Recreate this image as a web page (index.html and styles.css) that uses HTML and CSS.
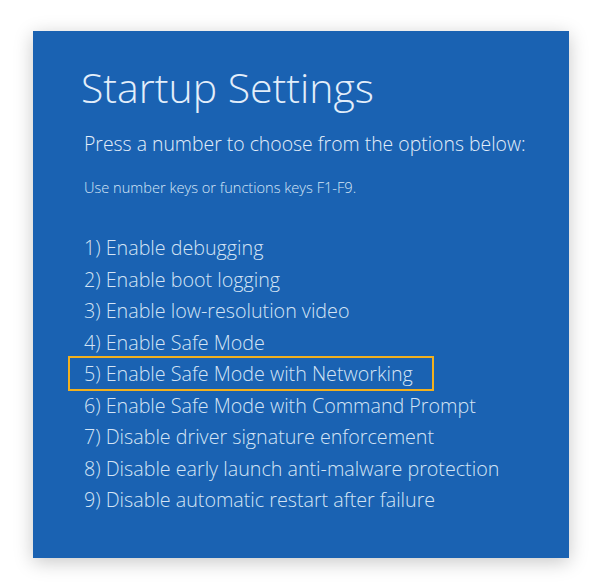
FILE: index.html
```html
<!DOCTYPE html>
<html>
<head>
<meta charset="utf-8">
<link rel="stylesheet" href="styles.css">
</head>
<body>
<div class="panel">
  <h1 class="title">Startup Settings</h1>
  <p class="lead">Press a number to choose from the options below:</p>
  <p class="hint">Use number keys or functions keys F1-F9.</p>
  <ul class="options">
    <li>1) Enable debugging</li>
    <li>2) Enable boot logging</li>
    <li>3) Enable low-resolution video</li>
    <li>4) Enable Safe Mode</li>
    <li class="selected">5) Enable Safe Mode with Networking</li>
    <li>6) Enable Safe Mode with Command Prompt</li>
    <li>7) Disable driver signature enforcement</li>
    <li>8) Disable early launch anti-malware protection</li>
    <li>9) Disable automatic restart after failure</li>
  </ul>
</div>
</body>
</html>
```
FILE: styles.css
```css
html, body {
  margin: 0;
  padding: 0;
  background: #ffffff;
}
body {
  width: 600px;
  height: 588px;
  overflow: hidden;
  font-family: "Open Sans", "Noto Sans", sans-serif;
}
.panel {
  box-sizing: border-box;
  margin: 31px 0 0 33px;
  width: 536px;
  height: 527px;
  background: #1a62b2;
  box-shadow: 0 4px 18px rgba(0, 0, 0, 0.22);
  padding: 28px 0 0 48px;
  color: #e3eefa;
}
.title {
  margin: 0;
  font-weight: 300;
  font-size: 41px;
  line-height: 56px;
  letter-spacing: 0;
}
.lead {
  margin: 16px 0 0 3px;
  font-weight: 300;
  font-size: 19.4px;
  line-height: 26px;
}
.hint {
  margin: 21px 0 0 3px;
  font-weight: 300;
  font-size: 14.6px;
  line-height: 18px;
  color: #d6e6f7;
}
.options {
  list-style: none;
  margin: 36px 0 0 0;
  padding: 0;
}
.options li {
  font-weight: 300;
  font-size: 19.7px;
  line-height: 31.5px;
  padding-left: 3px;
  color: #d4e4f5;
  box-sizing: border-box;
}
.options li.selected {
  margin-left: -13px;
  padding-left: 14px;
  width: 366px;
  height: 35px;
  line-height: 31px;
  border: 2px solid #f2b01e;
  margin-top: -2px;
  margin-bottom: -1.5px;
}
```
